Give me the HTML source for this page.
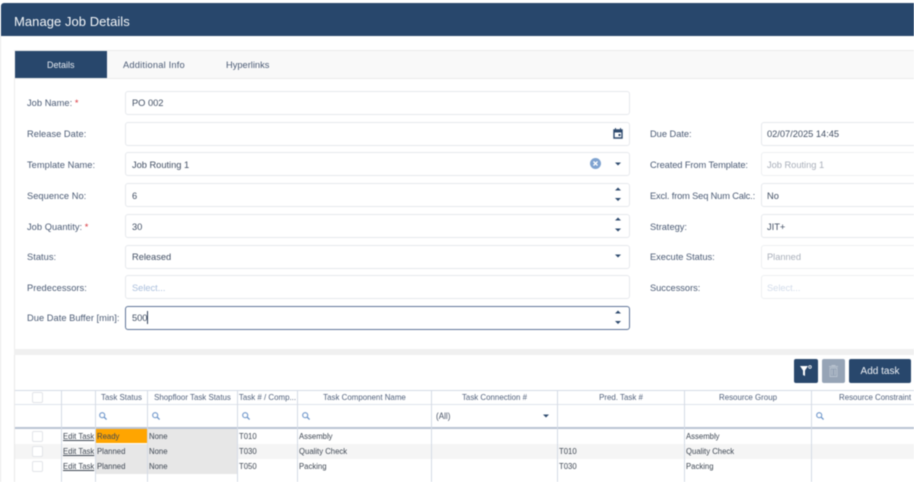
<!DOCTYPE html>
<html><head><meta charset="utf-8">
<style>
html,body{margin:0;padding:0;background:#fff}
#p{position:relative;width:914px;height:482px;overflow:hidden;background:#fff;font-family:"Liberation Sans",sans-serif;font-size:9px;color:#43526a;filter:blur(.4px)}
#p div{position:absolute;box-sizing:border-box}
.t{white-space:nowrap;line-height:12px}
.l{left:27px;color:#4a5a74;font-size:9.3px;letter-spacing:.03px}
.r{left:650px;color:#4a5a74;font-size:9.3px;letter-spacing:-.03px}
.i{left:125px;width:505px;height:24px;border:1px solid #e6e8ec;border-radius:3px;background:#fff}
.j{left:761px;width:170px;height:24px;border:1px solid #e6e8ec;border-radius:3px;background:#fff}
.v{left:132px;color:#414e63;font-size:9.3px;letter-spacing:-.02px}
.w{left:767px;color:#414e63;font-size:9.3px;letter-spacing:-.02px}
.c{color:#a9afba}
.ph{color:#a9bedc}
.h{top:391px;height:13px;line-height:13px;text-align:center;color:#4f5f7a;font-size:8.6px;white-space:nowrap;overflow:hidden;transform:scaleX(.92)}
.d{font-size:8.6px;color:#3d4652;line-height:12px;white-space:nowrap;transform:scaleX(.9);transform-origin:0 50%}
.vl{top:390px;width:1px;height:92px;background:#d5dbe6}
svg{position:absolute;overflow:visible}
</style></head><body><div id="p">
<div style="left:0;top:0;width:914px;height:3px;background:#fff"></div>
<div style="left:1px;top:3px;width:913px;height:33px;background:#28476c;border-radius:3px 0 0 0"></div>
<div class="t" style="left:14px;top:14px;color:#f4f6f8;font-size:13px;line-height:16px;letter-spacing:.05px">Manage Job Details</div>
<div style="left:0;top:36px;width:1px;height:446px;background:#e8e8e8"></div>

<div style="left:14px;top:50px;width:900px;height:299px;border-left:1px solid #ececec"></div>
<div style="left:14px;top:50px;width:900px;height:29px;background:#f9f9f9;border-top:1px solid #ececec;border-bottom:1px solid #ececec"></div>
<div style="left:15px;top:51px;width:92px;height:27px;background:#28476c"></div>
<div class="t" style="left:47px;top:59px;color:#e6ebf1;font-size:9px">Details</div>
<div class="t" style="left:123px;top:59px;color:#4a5a74;font-size:9.3px;letter-spacing:.2px">Additional Info</div>
<div class="t" style="left:226px;top:59px;color:#4a5a74;font-size:9.3px;letter-spacing:0">Hyperlinks</div>

<div class="t l" style="top:97px">Job Name: <span style="color:#d9363e">*</span></div>
<div class="t l" style="top:128px">Release Date:</div>
<div class="t l" style="top:159px">Template Name:</div>
<div class="t l" style="top:190px">Sequence No:</div>
<div class="t l" style="top:221px">Job Quantity: <span style="color:#d9363e">*</span></div>
<div class="t l" style="top:251px">Status:</div>
<div class="t l" style="top:282px">Predecessors:</div>
<div class="t l" style="top:312px">Due Date Buffer [min]:</div>

<div class="i" style="top:91px"></div>
<div class="i" style="top:122px"></div>
<div class="i" style="top:152px"></div>
<div class="i" style="top:183px"></div>
<div class="i" style="top:214px"></div>
<div class="i" style="top:245px"></div>
<div class="i" style="top:275px"></div>
<div class="i" style="top:306px;border:1px solid #5f7598"></div>

<div class="t v" style="top:97px">PO 002</div>
<div class="t v" style="top:159px">Job Routing 1</div>
<div class="t v" style="top:190px">6</div>
<div class="t v" style="top:221px">30</div>
<div class="t v" style="top:251px">Released</div>
<div class="t v ph" style="top:282px">Select...</div>
<div class="t v" style="top:312px">500</div>
<div style="left:147px;top:311px;width:1px;height:13px;background:#33435c"></div>

<svg style="left:613px;top:128px" width="10" height="11" viewBox="0 0 10 11"><path d="M1 2h8v8H1z" fill="#fff" stroke="#2e4a6e" stroke-width="1.4"/><path d="M.5 1.500h9v3h-9z" fill="#2e4a6e"/><path d="M2.500 0v2M7.500 0v2" stroke="#2e4a6e"/><rect x="5.500" y="6" width="2" height="2" fill="#2e4a6e"/></svg>
<svg style="left:590px;top:158px" width="11" height="11" viewBox="0 0 11 11"><circle cx="5.500" cy="5.500" r="5.500" fill="#7fa3d0"/><path d="M3.500 3.500l4 4M7.500 3.500l-4 4" stroke="#fff" stroke-width="1.300"/></svg>
<svg style="left:615px;top:162px" width="6" height="4"><path d="M0 .5h6L3 3.500z" fill="#2e4a6e"/></svg>
<svg style="left:615px;top:254px" width="6" height="4"><path d="M0 .5h6L3 3.500z" fill="#2e4a6e"/></svg>
<svg style="left:615px;top:187px" width="6" height="16"><path d="M0 3.500h6L3 .5zM0 11h6L3 14z" fill="#2e4a6e"/></svg>
<svg style="left:615px;top:217px" width="6" height="16"><path d="M0 3.500h6L3 .5zM0 11.500h6L3 14.500z" fill="#2e4a6e"/></svg>
<svg style="left:615px;top:310px" width="6" height="16"><path d="M0 3.500h6L3 .5zM0 11h6L3 14z" fill="#2e4a6e"/></svg>

<div class="t r" style="top:128px">Due Date:</div>
<div class="t r" style="top:159px;letter-spacing:-.1px">Created From Template:</div>
<div class="t r" style="top:190px;letter-spacing:-.16px">Excl. from Seq Num Calc.:</div>
<div class="t r" style="top:221px">Strategy:</div>
<div class="t r" style="top:251px">Execute Status:</div>
<div class="t r" style="top:282px">Successors:</div>

<div class="j" style="top:122px"></div>
<div class="j" style="top:152px;border-color:#eef0f2"></div>
<div class="j" style="top:183px"></div>
<div class="j" style="top:214px"></div>
<div class="j" style="top:245px;border-color:#eef0f2"></div>
<div class="j" style="top:275px;border-color:#eef0f2"></div>
<div class="t w" style="top:128px">02/07/2025 14:45</div>
<div class="t w c" style="top:159px">Job Routing 1</div>
<div class="t w" style="top:190px">No</div>
<div class="t w" style="top:221px">JIT+</div>
<div class="t w c" style="top:251px">Planned</div>
<div class="t w" style="top:282px;color:#d3dcea">Select...</div>

<div style="left:14px;top:349px;width:900px;height:6px;background:#f0f0f0"></div>
<div style="left:14px;top:355px;width:1px;height:127px;background:#e8e8e8"></div>

<div style="left:794px;top:359px;width:24px;height:24px;background:#28476c;border-radius:2px"></div>
<svg style="left:800px;top:365px" width="13" height="12" viewBox="0 0 13 12"><path d="M0 1h8L5 5.500V11L3 10V5.500z" fill="#fff"/><circle cx="10" cy="2" r="1.300" fill="none" stroke="#fff" stroke-width=".8"/></svg>
<div style="left:822px;top:359px;width:23px;height:24px;background:#96a4b6;border-radius:2px"></div>
<svg style="left:829px;top:365px" width="9" height="12" viewBox="0 0 9 12"><path d="M0 1.500h9M3 1.500V.5h3v1M1 3h7v8.500H1zM3 4.500v5.500M6 4.500v5.500" fill="none" stroke="#b9c3cf" stroke-width=".9"/></svg>
<div style="left:849px;top:359px;width:62px;height:24px;background:#28476c;border-radius:2px"></div>
<div class="t" style="left:849px;top:366px;width:62px;text-align:center;color:#eef1f5;font-size:10px">Add task</div>

<div style="left:15px;top:390px;width:899px;height:1px;background:#d5dbe6"></div>
<div style="left:15px;top:404px;width:899px;height:1px;background:#dfe4ec"></div>
<div style="left:15px;top:427px;width:899px;height:2px;background:#b9c3d3"></div>

<div style="left:15px;top:444px;width:899px;height:15px;background:#f5f5f5"></div>
<div style="left:96px;top:429px;width:51px;height:14px;background:#ffa500"></div>
<div style="left:96px;top:444px;width:51px;height:30px;background:#e7e7e7"></div>
<div style="left:148px;top:429px;width:89px;height:45px;background:#e7e7e7"></div>

<div class="vl" style="left:61px"></div>
<div class="vl" style="left:95px"></div>
<div class="vl" style="left:147px"></div>
<div class="vl" style="left:237px"></div>
<div class="vl" style="left:297px"></div>
<div class="vl" style="left:431px"></div>
<div class="vl" style="left:557px"></div>
<div class="vl" style="left:684px"></div>
<div class="vl" style="left:811px"></div>

<div style="left:32px;top:392px;width:11px;height:11px;border:1px solid #e2e4e8;border-radius:2px;background:#fff"></div>
<div style="left:32px;top:431px;width:11px;height:11px;border:1px solid #e2e4e8;border-radius:2px;background:#fff"></div>
<div style="left:32px;top:446px;width:11px;height:11px;border:1px solid #e2e4e8;border-radius:2px;background:#fff"></div>
<div style="left:32px;top:461px;width:11px;height:11px;border:1px solid #e2e4e8;border-radius:2px;background:#fff"></div>

<div class="h" style="left:96px;width:51px">Task Status</div>
<div class="h" style="left:146px;width:93px">Shopfloor Task Status</div>
<div class="h" style="left:236px;width:63px">Task # / Comp...</div>
<div class="h" style="left:298px;width:133px">Task Component Name</div>
<div class="h" style="left:432px;width:125px">Task Connection #</div>
<div class="h" style="left:558px;width:126px">Pred. Task #</div>
<div class="h" style="left:685px;width:126px">Resource Group</div>
<div class="h" style="left:839px;width:90px;text-align:left;transform-origin:0 50%">Resource Constraint</div>

<svg style="left:99px;top:412px" width="8" height="8" viewBox="0 0 8 8"><circle cx="3.200" cy="3.200" r="2.500" fill="none" stroke="#6f97cb" stroke-width="1.100"/><path d="M5 5l2.600 2.600" stroke="#6f97cb" stroke-width="1.300"/></svg>
<svg style="left:152px;top:412px" width="8" height="8" viewBox="0 0 8 8"><circle cx="3.200" cy="3.200" r="2.500" fill="none" stroke="#6f97cb" stroke-width="1.100"/><path d="M5 5l2.600 2.600" stroke="#6f97cb" stroke-width="1.300"/></svg>
<svg style="left:242px;top:412px" width="8" height="8" viewBox="0 0 8 8"><circle cx="3.200" cy="3.200" r="2.500" fill="none" stroke="#6f97cb" stroke-width="1.100"/><path d="M5 5l2.600 2.600" stroke="#6f97cb" stroke-width="1.300"/></svg>
<svg style="left:302px;top:412px" width="8" height="8" viewBox="0 0 8 8"><circle cx="3.200" cy="3.200" r="2.500" fill="none" stroke="#6f97cb" stroke-width="1.100"/><path d="M5 5l2.600 2.600" stroke="#6f97cb" stroke-width="1.300"/></svg>
<svg style="left:816px;top:412px" width="8" height="8" viewBox="0 0 8 8"><circle cx="3.200" cy="3.200" r="2.500" fill="none" stroke="#6f97cb" stroke-width="1.100"/><path d="M5 5l2.600 2.600" stroke="#6f97cb" stroke-width="1.300"/></svg>
<div class="d" style="left:436px;top:410px;color:#4a5568;font-size:9px">(All)</div>
<svg style="left:543px;top:414px" width="6" height="4"><path d="M0 .5h6L3 3.500z" fill="#2e4a6e"/></svg>

<div class="d" style="left:63px;top:430px;text-decoration:underline">Edit Task</div>
<div class="d" style="left:63px;top:445px;text-decoration:underline">Edit Task</div>
<div class="d" style="left:63px;top:460px;text-decoration:underline">Edit Task</div>
<div class="d" style="left:97px;top:430px">Ready</div>
<div class="d" style="left:97px;top:445px">Planned</div>
<div class="d" style="left:97px;top:460px">Planned</div>
<div class="d" style="left:149px;top:430px">None</div>
<div class="d" style="left:149px;top:445px">None</div>
<div class="d" style="left:149px;top:460px">None</div>
<div class="d" style="left:239px;top:430px">T010</div>
<div class="d" style="left:239px;top:445px">T030</div>
<div class="d" style="left:239px;top:460px">T050</div>
<div class="d" style="left:299px;top:430px">Assembly</div>
<div class="d" style="left:299px;top:445px">Quality Check</div>
<div class="d" style="left:299px;top:460px">Packing</div>
<div class="d" style="left:559px;top:445px">T010</div>
<div class="d" style="left:559px;top:460px">T030</div>
<div class="d" style="left:686px;top:430px">Assembly</div>
<div class="d" style="left:686px;top:445px">Quality Check</div>
<div class="d" style="left:686px;top:460px">Packing</div>
</div></body></html>
